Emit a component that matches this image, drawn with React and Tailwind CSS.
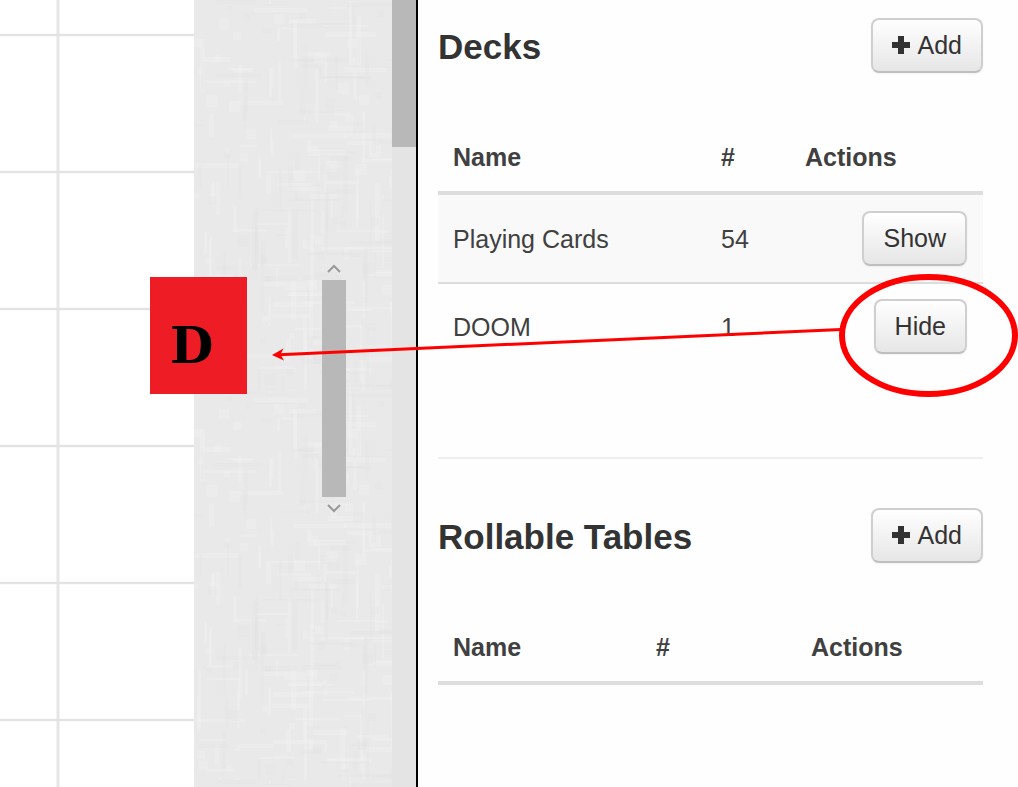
import React from "react";

const GRID = 137;
const gridRows = [0, 1, 2, 3, 4, 5];

function makeWeave() {
  let seed = 11;
  const next = () => {
    seed = (seed * 16807) % 2147483647;
    return seed / 2147483647;
  };
  const threads = [];
  for (let i = 0; i < 300; i++) {
    const kind = next();
    const long = 10 + Math.round(next() * 50);
    const thin = 2 + Math.round(next() * 3);
    const patch = 4 + Math.round(next() * 8);
    threads.push({
      x: Math.round(next() * 198),
      y: Math.round(next() * 390),
      w: kind < 0.35 ? long : kind < 0.7 ? thin : patch,
      h: kind < 0.35 ? thin : kind < 0.7 ? long : patch,
      light: next() > 0.4,
    });
  }
  return threads;
}

const weave = makeWeave();

function Linen() {
  return (
    <svg className="h-full w-full" aria-hidden="true">
      <defs>
        <pattern id="linen" width="198" height="390" patternUnits="userSpaceOnUse">
          <rect width="198" height="390" fill="#e9e9e9" />
          {weave.map((t, i) => (
            <rect
              key={i}
              x={t.x}
              y={t.y}
              width={t.w}
              height={t.h}
              fill={t.light ? "#f1f1f1" : "#e2e2e2"}
              opacity="0.35"
            />
          ))}
        </pattern>
      </defs>
      <rect width="100%" height="100%" fill="url(#linen)" />
    </svg>
  );
}

function GridPaper() {
  return (
    <svg className="h-full w-full" aria-hidden="true">
      <rect x="56.5" y="0" width="3" height="100%" fill="#e6e6e6" />
      {gridRows.map((r) => (
        <rect key={r} x="0" y={33.8 + r * GRID} width="100%" height="2.4" fill="#e3e3e3" />
      ))}
    </svg>
  );
}

function Chevron({ up }) {
  return (
    <svg width="16" height="10" viewBox="0 0 16 10" fill="none" stroke="#999" strokeWidth="2" aria-hidden="true">
      <path d={up ? "M2 8 L8 2 L14 8" : "M2 2 L8 8 L14 2"} />
    </svg>
  );
}

function Tabletop() {
  return (
    <section aria-label="Tabletop" className="relative flex w-[416px] shrink-0 bg-white">
      <div className="relative w-[194px]">
        <div className="absolute inset-0">
          <GridPaper />
        </div>
      </div>
      <div className="relative flex-1">
        <div className="absolute inset-0">
          <Linen />
        </div>
      </div>
      <div className="w-6 bg-[#e4e4e4]">
        <div className="h-[147px] bg-[#b8b8b8]" />
      </div>

      <div className="absolute left-[150px] top-[277px] flex h-[117px] w-[97px] items-center bg-[#ee1c25] pl-5 pt-5 font-['DejaVu_Serif',serif] text-[50px] font-bold leading-none text-black">
        D
      </div>

      <div className="absolute left-[322px] top-[264px] flex w-6 flex-col items-center gap-[6px]">
        <Chevron up />
        <div className="h-[217px] w-full bg-[#b8b8b8]" />
        <Chevron />
      </div>
    </section>
  );
}

function Button({ children }) {
  return (
    <button
      type="button"
      className="inline-flex h-[55px] items-center gap-[6px] rounded-lg border-2 border-[#cfcfcf] border-b-[#bfbfbf] bg-linear-to-b from-white to-[#e6e6e6] px-[19px] pb-[2px] text-[25px] leading-8 text-[#333333] shadow-xs"
    >
      {children}
    </button>
  );
}

function SectionHeader({ title }) {
  return (
    <header className="flex items-center justify-between">
      <h2 className="pt-[3px] text-[35px] font-bold leading-10 text-[#333333]">{title}</h2>
      <Button>
        <svg width="20" height="18" viewBox="0 0 20 18" fill="#333" aria-hidden="true">
          <path d="M6 0h6v6h6v6h-6v6H6v-6H0V6h6z" />
        </svg>
        Add
      </Button>
    </header>
  );
}

function ItemTable({ countCol, actionCol, rows }) {
  return (
    <table className="mt-[50px] w-full table-fixed border-separate border-spacing-0 text-left text-[25px] leading-[38px] text-[#404040]">
      <colgroup>
        <col />
        <col className={countCol} />
        <col className={actionCol} />
      </colgroup>
      <thead>
        <tr>
          {["Name", "#", "Actions"].map((h) => (
            <th key={h} scope="col" className="border-b-4 border-[#dddddd] p-[15px] font-bold">
              {h}
            </th>
          ))}
        </tr>
      </thead>
      <tbody>
        {rows.map((row, i) => {
          const cell =
            i === 0
              ? "px-[15px] py-4"
              : "border-t-2 border-[#dddddd] px-[15px] pb-4 pt-[15px]";
          return (
            <tr key={row.name} className={i % 2 === 0 ? "bg-[#f9f9f9]" : "bg-transparent"}>
              <td className={cell}>{row.name}</td>
              <td className={cell}>{row.count}</td>
              <td className={cell}>
                <div className="flex justify-end pr-px">
                  <Button>{row.action}</Button>
                </div>
              </td>
            </tr>
          );
        })}
      </tbody>
    </table>
  );
}

export default function App() {
  return (
    <div className="relative flex min-h-screen bg-white font-['Liberation_Sans',Arial,sans-serif]">
      <Tabletop />
      <aside className="min-w-0 flex-1 border-l-2 border-black bg-[#fefefe] pb-5 pl-5 pr-[35px] pt-[18px]">
        <section>
          <SectionHeader title="Decks" />
          <ItemTable
            countCol="w-[84px]"
            actionCol="w-[193px]"
            rows={[
              { name: "Playing Cards", count: 54, action: "Show" },
              { name: "DOOM", count: 1, action: "Hide" },
            ]}
          />
        </section>
        <hr className="mb-[49px] mt-[87px] border-t-2 border-[#eeeeee]" />
        <section>
          <SectionHeader title="Rollable Tables" />
          <ItemTable countCol="w-[155px]" actionCol="w-[187px]" rows={[]} />
        </section>
      </aside>

      <svg
        className="pointer-events-none absolute left-0 top-0"
        width="1018"
        height="787"
        viewBox="0 0 1018 787"
        fill="none"
        stroke="#ff0000"
        aria-hidden="true"
      >
        <ellipse cx="928.5" cy="335.5" rx="86.5" ry="58.5" strokeWidth="6" />
        <path d="M841 329.5 L279 354.7" strokeWidth="3" />
        <path d="M272 355 L283.5 348.5 L280.5 354.6 L284 360.5 Z" fill="#ff0000" stroke="none" />
      </svg>
    </div>
  );
}
